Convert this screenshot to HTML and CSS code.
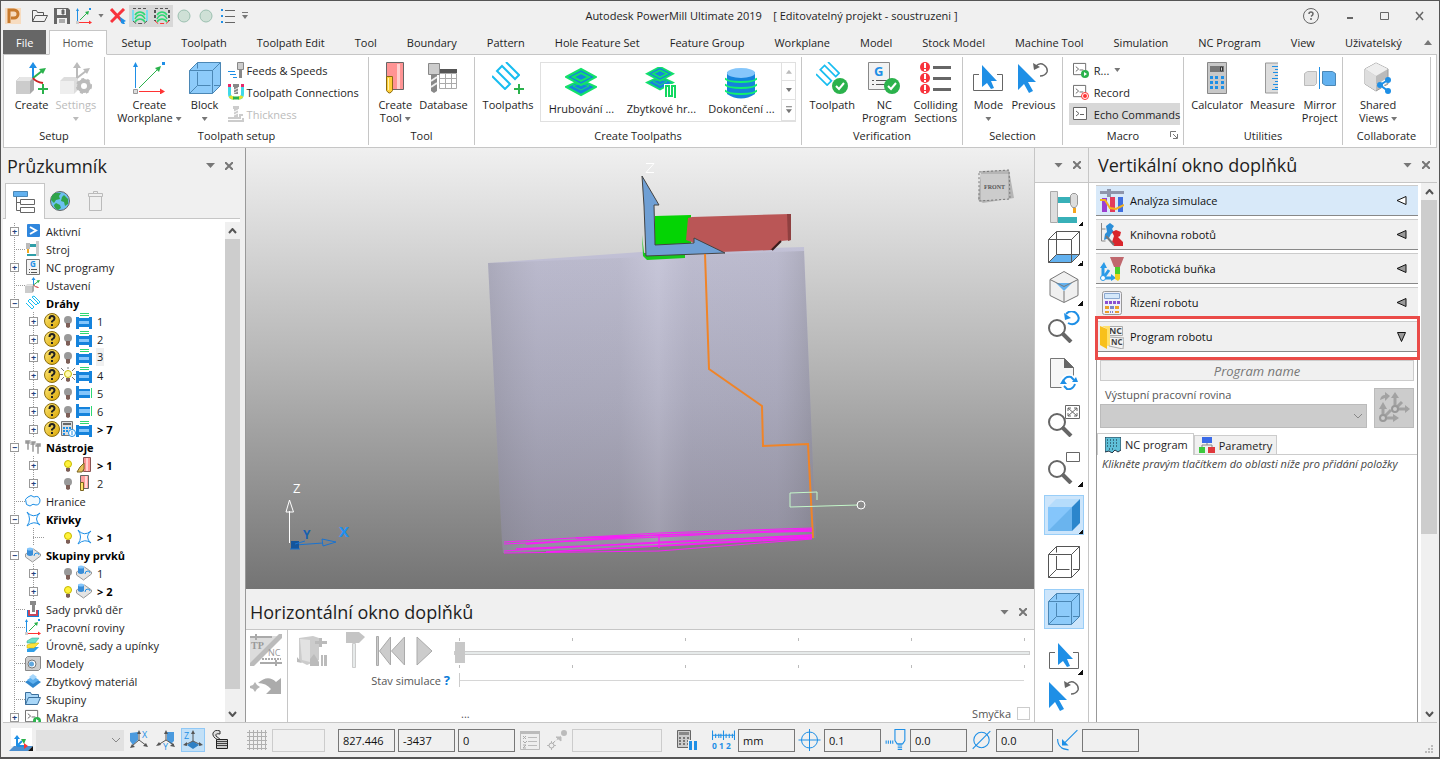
FILE: index.html
```
<!DOCTYPE html>
<html lang="cs">
<head>
    <meta charset="UTF-8">
    <meta name="viewport" content="width=device-width, initial-scale=1.0">
    <title>Autodesk PowerMill Ultimate 2019</title>
    <link rel="stylesheet" href="styles.css">
</head>
<body>

    <!-- Icon library -->
    <svg class="library" aria-hidden="true">
        <symbol id="i-logo" viewBox="0 0 16 16"><rect width="16" height="16" fill="#f7dcc0"/><path d="M4 15V2h5a4 4 0 0 1 0 8H6" fill="none" stroke="#c87a2c" stroke-width="3"/></symbol>
        <symbol id="i-open" viewBox="0 0 16 16"><path d="M.5 13.500v-11h4l1 2h6v3M.5 13.500l3-6h12l-3 6z" fill="none" stroke="#555"/></symbol>
        <symbol id="i-save" viewBox="0 0 16 16"><path d="M0 0h14l2 2v14H0z" fill="#666"/><path d="M3 1h9v6H3zM3 10h10v6H3z" fill="#f0f0f0"/><path d="M8 2h2v4H8zM5 12h6M5 14h6" stroke="#666" fill="#666"/></symbol>
        <symbol id="i-wp" viewBox="0 0 16 16"><path d="M1.500 2v11" stroke="#1e8fe6"/><path d="M3 14.500h11" stroke="#f33"/><path d="M1.500 0L0 3h3z" fill="#1e8fe6"/><path d="M16 14.500l-3-2v4z" fill="#f33"/><path d="M4 12l8-8" stroke="#2bb24c"/><path d="M13 3l-4 1 3 3z" fill="#2bb24c"/><path d="M0 13h3v3H0z" fill="#ccc"/><path d="M13 0h2v2h-2z" fill="#1e8fe6"/></symbol>
        <symbol id="i-del" viewBox="0 0 16 16"><path d="M1 1l12 13M14 1L1 14" stroke="#f8333c" stroke-width="3"/><path d="M10 9l6 4-2 1 1 2-2 0-2-1z" fill="#1e8fe6"/></symbol>
        <symbol id="i-zone" viewBox="0 0 16 16"><path d="M1 .5h14" stroke="#555" stroke-dasharray="3 2"/><path d="M1 2v11M15 2v11" stroke="#7ddcf0" stroke-width="2"/><path d="M1 13l3 2.500h8l3-2.500" stroke="#555" fill="none" stroke-dasharray="4 2"/><path d="M3 7q2-3 5-3t5 3M3 11q2-4 5-4t5 4M3 14q2-3 5-3t5 3" stroke="#2ed873" fill="none" stroke-width="1.500"/></symbol>
        <symbol id="i-zone2" viewBox="0 0 16 16"><path d="M1 .5h14" stroke="#555" stroke-dasharray="3 2"/><path d="M1 2v11M15 2v11" stroke="#555" stroke-width="2" stroke-dasharray="3 2"/><path d="M1 13l3 2.500h8l3-2.500" stroke="#f33" fill="none" stroke-dasharray="4 2"/><path d="M3 7q2-3 5-3t5 3M3 11q2-4 5-4t5 4M3 14q2-3 5-3t5 3" stroke="#2ed873" fill="none" stroke-width="1.500"/></symbol>
        <symbol id="i-dot" viewBox="0 0 16 16"><circle cx="8" cy="8" r="6" fill="#cfe0d6" stroke="#9cc0b0"/></symbol>
        <symbol id="i-list" viewBox="0 0 16 16"><path d="M5 2.500h10M5 8.500h10M5 14.500h10" stroke="#666"/><path d="M1 1h2v2H1zM1 7h2v2H1zM1 13h2v2H1z" fill="#1e8fe6"/></symbol>

        <!-- ribbon -->
        <symbol id="i-axes" viewBox="0 0 32 32"><path d="M0 19l4-4h14v13l-4 4H0z" fill="#a8a8a8"/><path d="M0 19l4-4h14l-4 4z" fill="#e6e6e6"/><path d="M0 19h14v13H0z" fill="#ccc"/><path d="M17 16V4" stroke="#1e8fe6" stroke-width="2"/><path d="M17 0l-4 6h8z" fill="#1e8fe6"/><path d="M17 16l9-7" stroke="#2bb24c" stroke-width="2"/><path d="M30 6l-7 1 4 5z" fill="#2bb24c"/><path d="M17 16q3 4 10 5" fill="none" stroke="#c22" stroke-width="2"/></symbol>
        <symbol id="i-create" viewBox="0 0 32 32"><use href="#i-axes" width="32" height="32"/><path d="M27 22v10M22 27h10" stroke="#fff" stroke-width="4"/><path d="M27 22v10M22 27h10" stroke="#2bb24c" stroke-width="2"/></symbol>
        <symbol id="i-settings" viewBox="0 0 32 32"><path d="M0 19l4-4h14v13l-4 4H0z" fill="#ddd"/><path d="M0 19h14v13H0z" fill="#eee"/><path d="M17 16V4M17 16l9-7" stroke="#bbb" stroke-width="2"/><path d="M17 0l-4 6h8zM30 6l-7 1 4 5z" fill="#bbb"/><circle cx="24" cy="24" r="5" fill="none" stroke="#bbb" stroke-width="4"/><circle cx="24" cy="24" r="7" fill="none" stroke="#bbb" stroke-width="2" stroke-dasharray="3 3"/></symbol>
        <symbol id="i-workplane" viewBox="0 0 32 32"><path d="M2.500 26V4" stroke="#1e8fe6"/><path d="M2.500 0L0 5h5z" fill="#1e8fe6"/><path d="M6 29.500h22" stroke="#f33"/><path d="M32 29.500l-5-3v6z" fill="#f33"/><path d="M6 26L25 7" stroke="#2bb24c"/><path d="M28 4l-6 2 4 4z" fill="#2bb24c"/><path d="M.5 27.500h4v4h-4z" fill="#ddd" stroke="#999"/><path d="M29 0h3v3h-3z" fill="#1e8fe6"/></symbol>
        <symbol id="i-block" viewBox="0 0 32 32"><path d="M.5 8.500l8-8h23v23l-8 8H.5z" fill="#8dcbfa"/><path d="M.5 8.500h23v23H.5zM.5 8.500l8-8h23l-8 8M31.500.5v23l-8 8M8.500.5v6M8.500 10v13.500h13M25 23.500h6.500M.5 31.500l8-8" fill="none" stroke="#4b87b5"/></symbol>
        <symbol id="i-feeds" viewBox="0 0 16 16"><path d="M9.500.5h6v7h-6z" fill="#ccc" stroke="#888"/><path d="M11 8h3v8h-3z" fill="#888"/><path d="M0 9.500h7M2 12.500h6M5 15.500h4" stroke="#1e8fe6"/></symbol>
        <symbol id="i-conn" viewBox="0 0 16 16"><path d="M1.500 3v7q0 4 4 4M14.500 3v7q0 4-4 4" fill="none" stroke="#3fd8e8" stroke-width="3"/><path d="M0 0h3v3H0zM13 0h3v3h-3z" fill="#e8286a"/><path d="M2 12q1 2 4 2M14 12q-1 2-4 2" fill="none" stroke="#e6e22a" stroke-width="3"/><path d="M5 14h6" stroke="#2bb24c" stroke-width="3" fill="none"/><path d="M5 0h6v3H5zM6 3h4v7H6z" fill="#888"/><path d="M6 6l4-2M6 9l4-2" stroke="#eee"/></symbol>
        <symbol id="i-thick" viewBox="0 0 16 16"><path d="M5 0h6v3H5zM6 3h4v8H6z" fill="#ccc"/><path d="M6 6l4-2M6 9l4-2" stroke="#fff"/><path d="M0 12h12v-3h3" fill="none" stroke="#ccc" stroke-width="2"/><path d="M0 15h15v-3" fill="none" stroke="#ccc" stroke-width="2"/></symbol>
        <symbol id="i-tool" viewBox="0 0 32 32"><path d="M7.500.5h17v27h-17z" fill="#ff9494" stroke="#666"/><path d="M18 2h3v25h-3z" fill="#ffd0d0"/><path d="M7.500 14.500h6v14q-3 5-6 0z" fill="#ffcf3a" stroke="#8a6a10"/><path d="M9.500 16v12" stroke="#fff3b0"/></symbol>
        <symbol id="i-database" viewBox="0 0 32 32"><path d="M12 7h18v4H12z" fill="#555"/><path d="M12.500 11.500h17v15h-17zM12 16.500h18M12 21.500h18M18.500 11v15M24.500 11v15" fill="#fff" stroke="#aaa"/><path d="M1.500 1.500h11v11h-11z" fill="#ccc" stroke="#888"/><path d="M4 13h6v16l-3 2-3-2z" fill="#888"/><path d="M4 19l6-4M4 25l6-4" stroke="#eee" stroke-width="2"/></symbol>
        <symbol id="i-zig" viewBox="0 0 28 28"><path d="M0 14l13 13 5-5L5 9l5-5 13 13 4-4L14 0" fill="none" stroke="#18bdf0" stroke-width="2"/></symbol>
        <symbol id="i-toolpaths" viewBox="0 0 32 32"><use href="#i-zig" width="28" height="28"/><path d="M27 20v12M21 26.500h11" stroke="#fff" stroke-width="4"/><path d="M27 22v10M22 27h10" stroke="#2bb24c" stroke-width="2"/></symbol>
        <symbol id="i-check" viewBox="0 0 16 16"><circle cx="8" cy="8" r="8" fill="#2bb24c"/><path d="M4 8l3 3 5-6" fill="none" stroke="#fff" stroke-width="2"/></symbol>
        <symbol id="i-verify" viewBox="0 0 32 32"><use href="#i-zig" width="24" height="24"/><use href="#i-check" x="16" y="16" width="16" height="16"/></symbol>
        <symbol id="i-rough" viewBox="0 0 32 32"><path d="M1 20l15-7 15 7-15 8z" fill="#1583dc" stroke="#12e26a" stroke-width="2"/><path d="M8 19l8-3 8 3-8 4z" fill="none" stroke="#12e26a"/><path d="M1 10l15-8 15 8-15 8z" fill="#1583dc" stroke="#12e26a" stroke-width="2"/><path d="M8 10l8-4 8 4-8 4z" fill="none" stroke="#12e26a" stroke-width="2"/></symbol>
        <symbol id="i-rest" viewBox="0 0 32 32"><use href="#i-rough" width="30" height="28" y="-2"/><path d="M19 17h13v15H19z" fill="#fff"/><path d="M21 30V19h3v10h3V19h3v12" fill="none" stroke="#12d860" stroke-width="2"/></symbol>
        <symbol id="i-finish" viewBox="0 0 32 32"><path d="M2 5v22q14 9 28 0V5z" fill="#1583dc"/><ellipse cx="16" cy="6" rx="14" ry="5" fill="#85c6fb"/><path d="M0 11q1 4 16 4t16-4M0 17q1 4 16 4t16-4M0 23q1 4 16 4t16-4" fill="none" stroke="#12f070" stroke-width="2"/></symbol>
        <symbol id="i-ncprog" viewBox="0 0 32 32"><path d="M.5.500h21v27H.5z" fill="#f2f2f2" stroke="#888"/><text x="6" y="14" font-size="13" font-weight="700" fill="#1e8fe6">G</text><path d="M4 18.500h2M8 18.500h11M4 22.500h2M8 22.500h9" stroke="#555"/><use href="#i-check" x="16" y="16" width="16" height="16"/></symbol>
        <symbol id="i-collide" viewBox="0 0 32 32"><g fill="#f8333c"><circle cx="5" cy="5" r="5"/><circle cx="5" cy="16" r="5"/><circle cx="5" cy="27" r="5"/></g><path d="M5 1v5M5 7v2M5 12v5M5 18v2M5 23v5M5 29v2" stroke="#fff" stroke-width="2"/><path d="M13 5.500h18M13 16.500h18M13 27.500h18" stroke="#666" stroke-width="3"/></symbol>
        <symbol id="i-mode" viewBox="0 0 32 32"><path d="M7 12.500H1.500v16h29v-16H25" fill="none" stroke="#666"/><path d="M10 3v22l5-4 4 6 3-1-3-7h6z" fill="#1e8fe6"/></symbol>
        <symbol id="i-previous" viewBox="0 0 32 32"><path d="M1 2v26l6-6 5 9 4-2-5-9h8z" fill="#1e8fe6"/><path d="M19 4q4-4 8-1 4 3 3 7-2 4-7 4" fill="none" stroke="#666" stroke-width="1.500"/><path d="M16 1l1 7 6-3z" fill="#666"/></symbol>
        <symbol id="i-echo" viewBox="0 0 16 16"><path d="M.5 1.500h13v12H.5z" fill="#fff" stroke="#666"/><path d="M3 5l3 2.500L3 10M7 8.500h4" fill="none" stroke="#666"/></symbol>
        <symbol id="i-run" viewBox="0 0 16 16"><use href="#i-echo" width="15" height="15"/><circle cx="12" cy="12" r="4" fill="#2bb24c"/><path d="M11 10l3 2-3 2z" fill="#fff"/></symbol>
        <symbol id="i-record" viewBox="0 0 16 16"><use href="#i-echo" width="15" height="15"/><circle cx="12" cy="12" r="3.500" fill="#fff" stroke="#f33"/><circle cx="12" cy="12" r="2" fill="#f33"/></symbol>
        <symbol id="i-calculator" viewBox="0 0 32 32"><path d="M6.500.500h19v31h-19z" fill="#c8c8c8" stroke="#888"/><path d="M9 4h14v6H9z" fill="#777"/><path d="M19.500 5h2v4h-2z" fill="#ccc" stroke="#333"/><path d="M9 14h3v3H9zM14 14h3v3h-3zM20 14h3v3h-3zM9 19h3v3H9zM14 19h3v3h-3zM20 19h3v3h-3zM9 24h3v3H9zM14 24h3v3h-3zM20 24h3v3h-3z" fill="#1e8fe6"/></symbol>
        <symbol id="i-measure" viewBox="0 0 32 32"><path d="M22 1H9.500v30H22" fill="#ddd" stroke="#999"/><path d="M16 4.500h6M17 10.500h5M16 16.500h6M17 22.500h5M16 27.500h6M19 7.500h3M19 13.500h3M19 19.500h3M19 25.500h3" stroke="#1e8fe6"/></symbol>
        <symbol id="i-mirror" viewBox="0 0 32 32"><path d="M.5 11.500l3-2h9v12l-2 2H.5z" fill="#ddd" stroke="#bbb"/><path d="M18.500 9.500h10l3 2v12h-10l-3-2z" fill="#62b1ef" stroke="#4b87b5"/><path d="M15.500 5v22" stroke="#1e8fe6"/></symbol>
        <symbol id="i-shared" viewBox="0 0 32 32"><path d="M14 1l12 6v15l-12 7L3 22V7z" fill="#bbb" stroke="#999"/><path d="M14 1l12 6-12 7L3 7z" fill="#eee"/><path d="M14 14v15L3 22V7z" fill="#ddd"/><path d="M26 18l-8 5 8 6" fill="none" stroke="#fff" stroke-width="4"/><path d="M26 18l-8 5 8 6" fill="none" stroke="#1e8fe6" stroke-width="2"/><g fill="#1e8fe6"><circle cx="26" cy="18" r="3"/><circle cx="18" cy="23" r="3"/><circle cx="26" cy="29" r="3"/></g></symbol>

        <!-- explorer -->
        <symbol id="i-tree" viewBox="0 0 24 24"><path d="M.5 1.500h14v5H.5z" fill="#62b1ef" stroke="#4b87b5"/><path d="M3.500 7v13.500h4M3.500 12.500h4M7.500 9.500h14v5h-14zM7.500 17.500h14v5h-14z" fill="none" stroke="#666"/></symbol>
        <symbol id="i-globe" viewBox="0 0 20 20"><circle cx="10" cy="10" r="9.500" fill="#6cc0f0" stroke="#666"/><path d="M5 2l6 0-2 3 1 3-4 1-2 3-3-3q0-5 4-7zM14 4l4 4v5l-3 2-1-4-3-1 1-4zM6 12l4 2 1 3-3 2q-4-2-4-5z" fill="#2ea44a"/></symbol>
        <symbol id="i-trash" viewBox="0 0 20 20"><path d="M3.500 5.500h12v14h-12zM2.500 2.500h14v3h-14zM7.500 2.500v-2h4v2" fill="none" stroke="#bbb"/></symbol>
        <symbol id="t-active" viewBox="0 0 16 16"><rect x="2" y="1" width="13" height="13" rx="1" fill="#2f86dd"/><path d="M5 4l6 3.500L5 11" fill="none" stroke="#fff" stroke-width="2"/></symbol>
        <symbol id="t-machine" viewBox="0 0 16 16"><path d="M11 0h3v15h-3z" fill="#ccc"/><path d="M4 3h7v3H4zM2 13h9v2H2z" fill="#2f9fa8"/><path d="M1 2h4v6H1z" fill="#bbb"/><path d="M2 8h2v4H2z" fill="#f0a81c"/></symbol>
        <symbol id="t-nc" viewBox="0 0 16 16"><path d="M1.500.5h13v15h-13z" fill="#f4f4f4" stroke="#777"/><text x="5" y="8" font-size="8" font-weight="700" fill="#1e8fe6">G</text><path d="M4 10.500h1M6 10.500h6M4 13.500h1M6 13.500h6" stroke="#555"/></symbol>
        <symbol id="t-paths" viewBox="0 0 16 16"><path d="M1 8l6 6 2-2-6-6 2-2 6 6 2-2-6-6 2-1 6 6-2 2" fill="none" stroke="#18bdf0"/></symbol>
        <symbol id="t-quest" viewBox="0 0 16 16"><circle cx="8" cy="8" r="7.500" fill="url(#gold)" stroke="#8a6d10"/><path d="M5.500 6q0-3 2.500-3t2.500 2.500q0 1.500-2.500 3v1M8 11v2" fill="none" stroke="#222" stroke-width="2"/></symbol>
        <symbol id="t-off" viewBox="0 0 16 16"><circle cx="8" cy="7" r="4" fill="#999"/><path d="M6 10h4v4l-2 1-2-1z" fill="#7d5f58"/></symbol>
        <symbol id="t-on" viewBox="0 0 16 16"><circle cx="8" cy="7" r="3.500" fill="#fff23a" stroke="#c5b800"/><path d="M6 11h4v3l-2 1-2-1z" fill="#7d5f58"/></symbol>
        <symbol id="t-lit" viewBox="0 0 16 16"><path d="M1 1l3 3M15 1l-3 3M0 7.500h3M13 7.500h3M1 13l3-3M15 13l-3-3M8 0v2" stroke="#777"/><circle cx="8" cy="7" r="3.500" fill="#fffab0" stroke="#c5b800"/><path d="M6 11h4v3l-2 1-2-1z" fill="#7d5f58"/></symbol>
        <symbol id="t-cyl" viewBox="0 0 16 16"><path d="M0 4h3v12H0zM13 4h3v12h-3zM3 5h10v9H3z" fill="#1583dc"/><path d="M3 8h10v3H3z" fill="#85c6fb"/></symbol>
        <symbol id="t-turn" viewBox="0 0 16 16"><use href="#t-cyl" width="16" height="16"/><path d="M4 0h9v1H4zM4 2h9v1H4z" fill="#2ed873"/></symbol>
        <symbol id="t-face" viewBox="0 0 16 16"><path d="M0 1h3v14H0zM3 4h11v9H3z" fill="#1583dc"/><path d="M3 6h11v4H3z" fill="#85c6fb"/><path d="M15 3h1v10h-1z" fill="#2ed873"/></symbol>
        <symbol id="t-calc" viewBox="0 0 16 16"><path d="M1.500.5h11v14h-11z" fill="#ddd" stroke="#777"/><path d="M3 2h8v2H3z" fill="#666"/><path d="M3 6h2v2H3zM6 6h2v2H6zM9 6h2v2H9zM3 9h2v2H3zM6 9h2v2H6zM3 12h2v2H3z" fill="#1e8fe6"/><circle cx="12" cy="12" r="3.500" fill="#fff" stroke="#1e8fe6"/><path d="M12 10v4" stroke="#1e8fe6"/></symbol>
        <symbol id="t-tools" viewBox="0 0 16 16"><path d="M0 1h6v4H4v6H2V5H0zM5 2h6v4H9v7H7V6H5zM10 4h6v4h-2v7h-2V8h-2z" fill="#999" stroke="#fff" stroke-width=".5"/></symbol>
        <symbol id="t-tip" viewBox="0 0 16 16"><path d="M7.500.500h7v14h-7z" fill="#ff9494" stroke="#855"/><path d="M10 1h2v13h-2z" fill="#ffd0d0"/><path d="M1 15l3-5 4-4v6l-2 3z" fill="#e6c15a" stroke="#7a6420"/></symbol>
        <symbol id="t-tool" viewBox="0 0 16 16"><path d="M4.500.5h8v13h-8z" fill="#ffa0a0" stroke="#666"/><path d="M9 1h2v12H9z" fill="#ffd8d8"/><path d="M4.500 7.500h3v8h-3z" fill="#ffe36b" stroke="#7a6420"/></symbol>
        <symbol id="t-bound" viewBox="0 0 16 16"><path d="M3 4q3-3 6 0 5-2 6 3 0 5-4 5-3-2-6 1-5-1-4-4-2-3 2-5z" fill="#f4fbff" stroke="#1e8fe6"/></symbol>
        <symbol id="t-curve" viewBox="0 0 16 16"><path d="M2 1q6 7 13 1-7 6 0 12-6-5-13 1 5-7 0-14z" fill="none" stroke="#1e8fe6"/></symbol>
        <symbol id="t-feat" viewBox="0 0 16 16"><path d="M.5 7l8-5 7 5v2l-8 6-7-5z" fill="#e4e4e4" stroke="#999"/><path d="M2 2v6q3 2 6 0V2z" fill="#3a8ed8"/><ellipse cx="5" cy="2" rx="3" ry="1.500" fill="#85c6fb"/><path d="M9 9q0-3 3-3 2 0 2 2" fill="none" stroke="#1e8fe6"/></symbol>
        <symbol id="t-holes" viewBox="0 0 16 16"><path d="M2 9h3v4h6V9h3v7H2z" fill="#1583dc"/><path d="M4 9v5h8V9" fill="none" stroke="#f33" stroke-width="1.500"/><path d="M5 0h6v4H5zM7 4h3v7H7z" fill="#888"/></symbol>
        <symbol id="t-levels" viewBox="0 0 16 16"><path d="M2 12l5-2h7l-5 5H2z" fill="#2f9fe8"/><path d="M2 8l5-2h7l-5 5H2z" fill="#ffe23a" stroke="#c8b000" stroke-width=".5"/><path d="M2 4l5-3h7l-4 5H2z" fill="#6ee0c8" stroke="#2f9f88" stroke-width=".5"/></symbol>
        <symbol id="t-model" viewBox="0 0 16 16"><path d="M.5 3.500l2-2h13v12l-2 2H.5z" fill="#ccc" stroke="#888"/><circle cx="7" cy="9" r="4" fill="#fff" stroke="#777"/><circle cx="6.500" cy="9" r="2.500" fill="#62a8de"/></symbol>
        <symbol id="t-stock" viewBox="0 0 16 16"><path d="M0 9l8-5 8 5-8 6z" fill="#2f86cd"/><path d="M2 7l6-4 6 4-6 4z" fill="#5fb0ee"/><path d="M4 4l4-3 4 3-4 3z" fill="#a5d6fb"/></symbol>
        <symbol id="t-folder" viewBox="0 0 16 16"><path d="M.5 13.500v-12h5l1 2h7v3M.5 13.500l3-7h12l-3 7z" fill="#a9d7f8" stroke="#3b6f9c"/></symbol>

        <!-- view toolbar -->
        <symbol id="v-machine" viewBox="0 0 32 32"><path d="M2.500.500h7v31h-7z" fill="#ddd" stroke="#aaa"/><path d="M10 6h13v6H10zM10 26h19v6H10z" fill="#38b0b8"/><path d="M22.500 4.500l2-2h3l2 2v9l-2 3h-3l-2-3z" fill="#ddd" stroke="#999"/><path d="M25 17h3v5h-3z" fill="#f5a51c"/></symbol>
        <symbol id="v-bottom" viewBox="0 0 32 32"><path d="M1 31l8-8h22l-7 8z" fill="#62b1ef"/><path d="M.5 8.500l8-8h23v23l-8 8H.5zM.5 8.500h23v23M23.500 8.500l8-8M8.500.5v23h23M.5 31.500l8-8" fill="none" stroke="#555"/></symbol>
        <symbol id="v-iso" viewBox="0 0 32 32"><path d="M16 .5l14 8v16l-14 7-14-7v-16z" fill="#f0f0f0" stroke="#777"/><path d="M8 12h16l-8 8z" fill="#62b1ef"/><path d="M2 8.500l14 7 14-7M16 20v11" fill="none" stroke="#777"/></symbol>
        <symbol id="v-lens" viewBox="0 0 32 32"><circle cx="9" cy="17" r="8" fill="none" stroke="#666" stroke-width="2"/><path d="M14 22l9 9" stroke="#666" stroke-width="4"/></symbol>
        <symbol id="v-back" viewBox="0 0 32 32"><use href="#v-lens" width="32" height="32"/><path d="M18 3q5-5 10-1 5 5 1 9-4 4-9 1" fill="none" stroke="#1e8fe6" stroke-width="2"/><path d="M16 2l1 7 6-2z" fill="#1e8fe6"/></symbol>
        <symbol id="v-refresh" viewBox="0 0 32 32"><path d="M2.500.500h14l9 9v20h-23z" fill="#f6f6f6" stroke="#777"/><path d="M16 0v10h10z" fill="#666"/><circle cx="21" cy="25" r="9" fill="#fff"/><path d="M15 24q2-6 8-5l3 3M27 26q-2 6-8 5l-3-3" fill="none" stroke="#1e8fe6" stroke-width="2"/><path d="M30 24h-6l4-5zM12 26h7l-4-5z" fill="#1e8fe6"/></symbol>
        <symbol id="v-fit" viewBox="0 0 32 32"><use href="#v-lens" width="32" height="32"/><path d="M17.500.5h14v13h-14z" fill="#fff" stroke="#666"/><path d="M20 3l9 8M29 3l-9 8M20 6V3h3M26 3h3v3M20 8v3h3M29 8v3h-3" fill="none" stroke="#666"/></symbol>
        <symbol id="v-box" viewBox="0 0 32 32"><use href="#v-lens" width="32" height="32"/><path d="M18.500.5h13v9h-13z" fill="#fff" stroke="#666"/></symbol>
        <symbol id="v-shaded" viewBox="0 0 32 32"><path d="M0 8h24v24H0z" fill="#6ab4ee"/><path d="M0 8l8-8h24l-8 8z" fill="#b5dcfb"/><path d="M24 8l8-8v24l-8 8z" fill="#2b86cc"/><path d="M0 32L24 8H0z" fill="#85c6fb"/></symbol>
        <symbol id="v-wire" viewBox="0 0 32 32"><path d="M.5 8.500h23v23H.5zM.5 8.500l8-8h23l-8 8M31.500.5v23l-8 8M8.500.5v6M8.500 10v13.500h13M25 23.500h6.500M.5 31.500l8-8" fill="none" stroke="#555"/></symbol>

        <!-- add-in panels -->
        <symbol id="a-analysis" viewBox="0 0 24 24"><path d="M2 9h5v14H2z" fill="#9b3fd0"/><path d="M10 8h5v15h-5z" fill="#e33c5c"/><path d="M18 8h5v15h-5z" fill="#3f6fe0"/><path d="M0 2h24v3H0zM7 0h4v8H7z" fill="#8e95ab"/><path d="M0 11l5 0 5 8 6 1 8-4" fill="none" stroke="#f5b31c" stroke-width="2"/></symbol>
        <symbol id="a-robots" viewBox="0 0 24 24"><path d="M1.500 0v18h4M1.500 6h4" fill="none" stroke="#888"/><path d="M6 3l4-3 4 3-2 3 2 3-3 2-2 4-5 2 1-6 2-2z" fill="#2b8ed8"/><path d="M12 9l4-2 5 2-1 4-2 1 5 5v4h-9l-2-4 2-6z" fill="#d9262c"/><path d="M6 13l8 9" stroke="#777" stroke-width="2"/></symbol>
        <symbol id="a-cell" viewBox="0 0 24 24"><path d="M3 20V9M3 21h9M4 20l5-7" stroke="#2b9be8" stroke-width="3"/><path d="M0 11l4-6 3 6zM11 17l5 4-5 3z" fill="#2b9be8"/><circle cx="3" cy="21" r="2.500" fill="#fff" stroke="#2b9be8"/><path d="M10 0h14l-4 10h-6z" fill="#c0686e"/><path d="M15 10h5v7h-5z" fill="#4ad02a"/><path d="M15 17h5v5l-2 2-3-2z" fill="#f0d020"/></symbol>
        <symbol id="a-control" viewBox="0 0 24 24"><rect x="2.500" y=".5" width="19" height="23" rx="2" fill="#f0f0f8" stroke="#999"/><path d="M4.500 2.500h15v5h-15z" fill="#d5e8fa" stroke="#8aa8d0"/><path d="M5 10h3v3H5zM9 10h3v3H9zM13 10h3v3h-3zM17 10h3v3h-3z" fill="#8a4fd0"/><path d="M5 15h4v3H5zM15 15h4v3h-4zM5 20h4v2H5zM15 20h4v2h-4z" fill="#eba02a"/><path d="M10 15h4v3h-4zM10 20h1v2h-1zM12 20h1v2h-1z" fill="#7b86c8"/></symbol>
        <symbol id="a-program" viewBox="0 0 24 24"><path d="M8.500 1.500h14v9h-14zM9 12l15 1-1 11-14-3z" fill="#f4f4f4" stroke="#aaa"/><text x="9" y="9" font-size="9" font-weight="700" fill="#444">NC</text><text x="11" y="20" font-size="8" font-weight="700" fill="#444">NC</text><path d="M2 1h8v19l-3 1V4z" fill="#ffdf6a"/><path d="M0 1l7 3v20l-7-4z" fill="#f8c01c"/></symbol>
        <symbol id="a-tape" viewBox="0 0 16 16"><path d="M0 0h16v13l-3 2-3-2-3 3-3-2-4 1z" fill="#5fc0d8" stroke="#234"/><path d="M2 3h12M2 6h12M2 9h12M4 12h6" stroke="#123" stroke-dasharray="1 2"/></symbol>
        <symbol id="a-params" viewBox="0 0 16 16"><path d="M8 5v3M3 11V8h10v3" fill="none" stroke="#888"/><path d="M3 0h10v6H3z" fill="#3a6ae8"/><path d="M0 10h6v6H0z" fill="#3cc83c"/><path d="M9 10h7v6H9z" fill="#e0383c"/></symbol>
        <symbol id="a-frames" viewBox="0 0 32 32"><g fill="none" stroke="#a2a2a2" stroke-width="3"><path d="M5 26V15M5 26h12M17 17V5M17 17h13M17 17l7-7M5 26l8-8"/></g><path d="M1 17l4-7 4 7zM13 6l4-6 4 6zM15 22l6 4-6 4zM27 13l5 4-5 4zM2 8q1-5 5-5V0l5 4-5 5V6z" fill="#a2a2a2"/><g fill="#ccc" stroke="#999" stroke-width="2"><circle cx="5" cy="26" r="3"/><circle cx="17" cy="17" r="3"/></g></symbol>
        <symbol id="a-tpnc" viewBox="0 0 32 32"><path d="M0 2h30L2 30H0z" fill="#dcdcdc"/><path d="M32 0v4L4 32H0v-3L29 0z" fill="#bbb"/><path d="M0 3h22M10 29h22M6 0v6M26 26v6" stroke="#aaa" stroke-width="2"/><text x="1" y="15" font-size="10" font-weight="700" font-family="Liberation Serif, serif" fill="#999">TP</text><text x="18" y="22" font-size="9" fill="#999">NC</text><path d="M12 25h19" stroke="#aaa" stroke-dasharray="2 1" stroke-width="2"/></symbol>
        <symbol id="a-jump" viewBox="0 0 32 20"><path d="M8 6Q18-3 26 5l5-4v16H16l5-5q-5-6-13-6z" fill="#ababab"/><path d="M0 9l3-1 2-3 2 3 3 2-3 2-2 3-2-3-3-1z" fill="#b5b5b5"/></symbol>
        <symbol id="a-robot" viewBox="0 0 32 32"><path d="M2 3l14-2 6 2v22l-12 5-8-4z" fill="#ccc"/><path d="M3 4l10 1v22l-8-2z" fill="#e2e2e2"/><path d="M18 6h12v3H18zM22 3h3v9h-3zM13 24l4-5 5 8v4h-9zM24 20h2v11h-2zM27 20h3v11h-3zM0 22l5 6-5-1z" fill="#bbb"/></symbol>
        <symbol id="a-flag" viewBox="0 0 20 36"><path d="M0 0h13l6 5-6 6H0z" fill="#c4c4c4"/><path d="M6.500 11.500h3v24h-3z" fill="#e6eaea" stroke="#ccc"/></symbol>
        <symbol id="a-rewind" viewBox="0 0 32 32"><path d="M1.500 1.500h2v29h-2zM15.500 2v28l-11-14zM29.500 2v28l-13-14z" fill="#ccc" stroke="#aaa"/></symbol>
        <symbol id="a-play" viewBox="0 0 18 32"><path d="M1 2l15 14L1 30z" fill="#ccc" stroke="#aaa"/></symbol>

        <!-- status bar -->
        <symbol id="s-plane" viewBox="0 0 24 24"><path d="M2 0h21v18H2z" fill="#fff"/><path d="M0 23l5-5h19l-5 5z" fill="#4b8fd0"/><path d="M8 18V10M8 18h8M8 18l5-5" stroke="#1e8fe6" stroke-width="2"/><path d="M5 11l3-4 3 4z" fill="#1e8fe6"/><path d="M15 15l4 3-4 3z" fill="#f33"/><path d="M12 11h5l-2 5z" fill="#2bb24c"/><path d="M24 18v5h-5z" fill="#111"/></symbol>
        <symbol id="s-x" viewBox="0 0 20 20"><path d="M1 3l8-1v8l-5 5-3-4z" fill="#4b9ade"/><path d="M10 2v8l-7 6M10 10l8 6" fill="none" stroke="#555"/><path d="M8 4l2-4 2 4zM1 18l2-4 3 3zM19 17l-5-1 3-3z" fill="#555"/><text x="13" y="8" font-size="9" fill="#1e8fe6">X</text></symbol>
        <symbol id="s-y" viewBox="0 0 20 20"><path d="M11 2h7v9l-3 3-4-4z" fill="#4b9ade"/><path d="M10 2v8l-8 5M10 10l8 5" fill="none" stroke="#555"/><path d="M8 4l2-4 2 4zM0 16l3-4 2 3zM19 17l-5-1 3-3z" fill="#555"/><text x="7" y="20" font-size="9" fill="#1e8fe6">Y</text></symbol>
        <symbol id="s-z" viewBox="0 0 20 20"><path d="M4 15l6-4 6 4-6 4z" fill="#2f80c4"/><path d="M10 2v9l-8 4M10 11l8 4" fill="none" stroke="#555"/><path d="M8 4l2-4 2 4zM0 15l4-3v4zM20 15l-4-3v4z" fill="#555"/><text x="1" y="9" font-size="9" fill="#1e8fe6">Z</text></symbol>
        <symbol id="s-lock" viewBox="0 0 20 20"><path d="M8 10Q2 7 3 3q2-4 7-2v3Q5 3 6 6l5 4" fill="#ddd" stroke="#333"/><path d="M6.500 9.500h11v9h-11z" fill="#ccc" stroke="#222"/><path d="M7 11.500h10M7 13.500h10M7 15.500h10" stroke="#444"/></symbol>
        <symbol id="s-grid" viewBox="0 0 20 20"><path d="M2.500 0v20M6.500 0v20M10.500 0v20M14.500 0v20M18.500 0v20M0 2.500h20M0 6.500h20M0 10.500h20M0 14.500h20M0 18.500h20" stroke="#b0b0b0"/></symbol>
        <symbol id="s-xyz" viewBox="0 0 20 20"><path d="M.5 1.500h19v18H.5z" fill="#eee" stroke="#bbb"/><path d="M0 1h20v3H0zM8 7h9v1H8zM8 11h9v1H8zM8 15h9v1H8z" fill="#bbb"/><path d="M3 6l3 3M6 6L3 9M3 11l2 2 2-2M3 15h3l-3 3h3" fill="none" stroke="#aaa"/></symbol>
        <symbol id="s-points" viewBox="0 0 20 20"><circle cx="17" cy="3" r="3" fill="#bbb"/><path d="M6 13l8-7" stroke="#aaa" stroke-dasharray="3 2"/><path d="M9 7h5v4zM0 15.500h9M4.500 11v9" fill="#bbb" stroke="#bbb"/><circle cx="4.500" cy="15.500" r="2.500" fill="#eee" stroke="#aaa"/></symbol>
        <symbol id="s-pause" viewBox="0 0 20 20"><path d="M.5.500h13v17H.5z" fill="#ccc" stroke="#666"/><path d="M2 2h10v3H2z" fill="#888"/><path d="M2 8h10M2 11h10M2 14h10" stroke="#777" stroke-width="2" stroke-dasharray="2 2"/><path d="M11 10h9v10h-9z" fill="#f0f0f0"/><path d="M12 11h3v9h-3zM17 11h3v9h-3z" fill="#1e8fe6"/></symbol>
        <symbol id="s-ruler" viewBox="0 0 22 20"><path d="M.5 1v9M11 1v9M21.500 1v9M.5 5.500h21M3.500 4v4M6.500 4v4M8.500 4v4M13.500 4v4M16.500 4v4M19.500 4v4" stroke="#1e8fe6"/><text x="0" y="19" font-size="8" font-weight="700" fill="#1e8fe6">0 1 2</text></symbol>
        <symbol id="s-cross" viewBox="0 0 22 22"><circle cx="11" cy="11" r="8" fill="none" stroke="#1e8fe6"/><path d="M0 11h22M11 0v22" stroke="#1e8fe6"/></symbol>
        <symbol id="s-step" viewBox="0 0 20 20"><path d="M9.500.5h9v10l-2 3h-5l-2-3z" fill="none" stroke="#1e8fe6"/><path d="M1 12h8" stroke="#1e8fe6" stroke-width="3" stroke-dasharray="1 1"/><path d="M14 14v6" stroke="#1e8fe6" stroke-width="4" stroke-dasharray="1 1"/></symbol>
        <symbol id="s-diam" viewBox="0 0 20 20"><circle cx="10" cy="10" r="7" fill="none" stroke="#1e8fe6"/><path d="M2 18L18 2" stroke="#1e8fe6"/></symbol>
        <symbol id="s-rad" viewBox="0 0 20 20"><path d="M19 1L6 14" stroke="#1e8fe6"/><path d="M5 15v-6l6 6z" fill="#1e8fe6"/><path d="M1 9q0 9 10 10" fill="none" stroke="#1e8fe6"/></symbol>
    </svg>

    <!-- Title bar -->
    <header class="titlebar">
        <div class="quick">
            <svg class="icon16"><use href="#i-logo"/></svg>
            <button class="quick-button" aria-label="Open"><svg class="icon16"><use href="#i-open"/></svg></button>
            <button class="quick-button" aria-label="Save"><svg class="icon16"><use href="#i-save"/></svg></button>
            <button class="quick-button" aria-label="Workplane"><svg class="icon16"><use href="#i-wp"/></svg></button>
            <span class="caret"></span>
            <button class="quick-button" aria-label="Delete"><svg class="icon16"><use href="#i-del"/></svg></button>
            <button class="quick-button pressed" aria-label="Rapid moves"><svg class="icon16"><use href="#i-zone"/></svg></button>
            <button class="quick-button pressed" aria-label="Collisions"><svg class="icon16"><use href="#i-zone2"/></svg></button>
            <button class="quick-button" aria-label="State 1"><svg class="icon16"><use href="#i-dot"/></svg></button>
            <button class="quick-button" aria-label="State 2"><svg class="icon16"><use href="#i-dot"/></svg></button>
            <button class="quick-button" aria-label="List"><svg class="icon16"><use href="#i-list"/></svg></button>
            <span class="caret bar"></span>
        </div>
        <div class="app-title">Autodesk PowerMill Ultimate 2019 &nbsp;&nbsp; [ Editovatelný projekt - soustruzeni ]</div>
        <div class="window-buttons">
            <button aria-label="Help"><svg width="18" height="18"><circle cx="9" cy="9" r="7.500" fill="none" stroke="#666"/><path d="M7 7q0-2 2-2t2 2q0 1-2 2.500M9 11v2" fill="none" stroke="#666" stroke-width="1.500"/></svg></button>
            <button aria-label="Minimize"><svg width="10" height="10"><path d="M2 7h6" stroke="#666" stroke-width="2"/></svg></button>
            <button aria-label="Maximize"><svg width="10" height="10"><path d="M.5 1.500h8v7h-8z" fill="none" stroke="#666"/></svg></button>
            <button aria-label="Close"><svg width="10" height="10"><path d="M1 1l7 8M8 1L1 9" stroke="#666" stroke-width="1.500"/></svg></button>
        </div>
    </header>

    <!-- Ribbon tabs -->
    <nav class="tabs">
        <button class="tab file">File</button>
        <button class="tab active">Home</button>
        <button class="tab">Setup</button>
        <button class="tab">Toolpath</button>
        <button class="tab">Toolpath Edit</button>
        <button class="tab">Tool</button>
        <button class="tab">Boundary</button>
        <button class="tab">Pattern</button>
        <button class="tab">Hole Feature Set</button>
        <button class="tab">Feature Group</button>
        <button class="tab">Workplane</button>
        <button class="tab">Model</button>
        <button class="tab">Stock Model</button>
        <button class="tab">Machine Tool</button>
        <button class="tab">Simulation</button>
        <button class="tab">NC Program</button>
        <button class="tab">View</button>
        <button class="tab">Uživatelský</button>
        <button class="collapse" aria-label="Collapse ribbon"><svg width="8" height="5"><path d="M4 0l4 5H0z" fill="#777"/></svg></button>
    </nav>

    <section class="ribbon">
        <div class="group">
            <div class="tools">
                <button class="big"><svg class="icon32"><use href="#i-create"/></svg>Create</button>
                <button class="big" disabled><svg class="icon32"><use href="#i-settings"/></svg>Settings<span class="line"><i class="caret"></i></span></button>
            </div>
            <div class="group-name">Setup</div>
        </div>
        <div class="group">
            <div class="tools">
                <button class="big"><svg class="icon32"><use href="#i-workplane"/></svg>Create<span class="line">Workplane <i class="caret"></i></span></button>
                <button class="big"><svg class="icon32"><use href="#i-block"/></svg>Block<span class="line"><i class="caret"></i></span></button>
                <div class="stack">
                    <button class="small"><svg class="icon16"><use href="#i-feeds"/></svg>Feeds &amp; Speeds</button>
                    <button class="small"><svg class="icon16"><use href="#i-conn"/></svg>Toolpath Connections</button>
                    <button class="small" disabled><svg class="icon16"><use href="#i-thick"/></svg>Thickness</button>
                </div>
            </div>
            <div class="group-name">Toolpath setup</div>
        </div>
        <div class="group">
            <div class="tools">
                <button class="big"><svg class="icon32"><use href="#i-tool"/></svg>Create<span class="line">Tool <i class="caret"></i></span></button>
                <button class="big"><svg class="icon32"><use href="#i-database"/></svg>Database</button>
            </div>
            <div class="group-name">Tool</div>
        </div>
        <div class="group">
            <div class="tools">
                <button class="big"><svg class="icon32"><use href="#i-toolpaths"/></svg>Toolpaths</button>
                <div class="gallery">
                    <button class="big"><svg class="icon32"><use href="#i-rough"/></svg>Hrubování ...</button>
                    <button class="big"><svg class="icon32"><use href="#i-rest"/></svg>Zbytkové hr...</button>
                    <button class="big"><svg class="icon32"><use href="#i-finish"/></svg>Dokončení ...</button>
                    <div class="gallery-scroll">
                        <button aria-label="Previous row"><i class="caret up"></i></button>
                        <button aria-label="Next row"><i class="caret"></i></button>
                        <button aria-label="More"><i class="caret bar"></i></button>
                    </div>
                </div>
            </div>
            <div class="group-name">Create Toolpaths</div>
        </div>
        <div class="group">
            <div class="tools">
                <button class="big"><svg class="icon32"><use href="#i-verify"/></svg>Toolpath</button>
                <button class="big"><svg class="icon32"><use href="#i-ncprog"/></svg>NC<span class="line">Program</span></button>
                <button class="big"><svg class="icon32"><use href="#i-collide"/></svg>Colliding<span class="line">Sections</span></button>
            </div>
            <div class="group-name">Verification</div>
        </div>
        <div class="group">
            <div class="tools">
                <button class="big"><svg class="icon32"><use href="#i-mode"/></svg>Mode<span class="line"><i class="caret"></i></span></button>
                <button class="big"><svg class="icon32"><use href="#i-previous"/></svg>Previous</button>
            </div>
            <div class="group-name">Selection</div>
        </div>
        <div class="group">
            <div class="tools">
                <div class="stack macro">
                    <button class="small"><svg class="icon16"><use href="#i-run"/></svg>R... <i class="caret"></i></button>
                    <button class="small"><svg class="icon16"><use href="#i-record"/></svg>Record</button>
                    <button class="small pressed"><svg class="icon16"><use href="#i-echo"/></svg>Echo Commands</button>
                </div>
            </div>
            <div class="group-name launcher">Macro<svg width="8" height="8"><path d="M.5 6V.5H6M3 3l4 4M7.500 3v4.500H3" fill="none" stroke="#777"/></svg></div>
        </div>
        <div class="group">
            <div class="tools">
                <button class="big"><svg class="icon32"><use href="#i-calculator"/></svg>Calculator</button>
                <button class="big"><svg class="icon32"><use href="#i-measure"/></svg>Measure</button>
                <button class="big"><svg class="icon32"><use href="#i-mirror"/></svg>Mirror<span class="line">Project</span></button>
            </div>
            <div class="group-name">Utilities</div>
        </div>
        <div class="group">
            <div class="tools left">
                <button class="big"><svg class="icon32"><use href="#i-shared"/></svg>Shared<span class="line">Views <i class="caret"></i></span></button>
            </div>
            <div class="group-name">Collaborate</div>
        </div>
    </section>

    <main class="workspace">

        <!-- Explorer -->
        <aside class="explorer">
            <div class="panel-head">
                <h2>Průzkumník</h2>
                <button aria-label="Menu"><i class="caret big-caret"></i></button>
                <button aria-label="Close"><svg width="8" height="8"><path d="M0 0l8 8M8 0L0 8" stroke="#777" stroke-width="2"/></svg></button>
            </div>
            <div class="explorer-tabs">
                <button class="active" aria-label="Tree"><svg class="icon24"><use href="#i-tree"/></svg></button>
                <button aria-label="Web"><svg class="icon20"><use href="#i-globe"/></svg></button>
                <button aria-label="Recycle bin"><svg class="icon20"><use href="#i-trash"/></svg></button>
            </div>
            <div class="explorer-body">
                <ul class="tree">
                    <li class="row"><button class="toggle">+</button><svg class="icon16"><use href="#t-active"/></svg><span>Aktivní</span></li>
                    <li class="row"><i class="leaf"></i><svg class="icon16"><use href="#t-machine"/></svg><span>Stroj</span></li>
                    <li class="row"><button class="toggle">+</button><svg class="icon16"><use href="#t-nc"/></svg><span>NC programy</span></li>
                    <li class="row"><i class="leaf"></i><svg class="icon16"><use href="#i-axes"/></svg><span>Ustavení</span></li>
                    <li class="row"><button class="toggle">−</button><svg class="icon16"><use href="#t-paths"/></svg><b>Dráhy</b></li>
                    <li>
                        <ul class="branch">
                            <li class="row"><button class="toggle">+</button><svg class="icon16"><use href="#t-quest"/></svg><svg class="icon16"><use href="#t-off"/></svg><svg class="icon16"><use href="#t-turn"/></svg><span>1</span></li>
                            <li class="row"><button class="toggle">+</button><svg class="icon16"><use href="#t-quest"/></svg><svg class="icon16"><use href="#t-off"/></svg><svg class="icon16"><use href="#t-turn"/></svg><span>2</span></li>
                            <li class="row"><button class="toggle">+</button><svg class="icon16"><use href="#t-quest"/></svg><svg class="icon16"><use href="#t-off"/></svg><svg class="icon16"><use href="#t-turn"/></svg><span class="hovered">3</span></li>
                            <li class="row"><button class="toggle">+</button><svg class="icon16"><use href="#t-quest"/></svg><svg class="icon16"><use href="#t-lit"/></svg><svg class="icon16"><use href="#t-turn"/></svg><span>4</span></li>
                            <li class="row"><button class="toggle">+</button><svg class="icon16"><use href="#t-quest"/></svg><svg class="icon16"><use href="#t-off"/></svg><svg class="icon16"><use href="#t-face"/></svg><span>5</span></li>
                            <li class="row"><button class="toggle">+</button><svg class="icon16"><use href="#t-quest"/></svg><svg class="icon16"><use href="#t-off"/></svg><svg class="icon16"><use href="#t-face"/></svg><span>6</span></li>
                            <li class="row"><button class="toggle">+</button><svg class="icon16"><use href="#t-quest"/></svg><svg class="icon16"><use href="#t-calc"/></svg><svg class="icon16"><use href="#t-turn"/></svg><b>&gt; 7</b></li>
                        </ul>
                    </li>
                    <li class="row"><button class="toggle">−</button><svg class="icon16"><use href="#t-tools"/></svg><b>Nástroje</b></li>
                    <li>
                        <ul class="branch">
                            <li class="row"><button class="toggle">+</button><svg class="icon16"></svg><svg class="icon16"><use href="#t-on"/></svg><svg class="icon16"><use href="#t-tip"/></svg><b>&gt; 1</b></li>
                            <li class="row"><button class="toggle">+</button><svg class="icon16"></svg><svg class="icon16"><use href="#t-off"/></svg><svg class="icon16"><use href="#t-tool"/></svg><span>2</span></li>
                        </ul>
                    </li>
                    <li class="row"><i class="leaf"></i><svg class="icon16"><use href="#t-bound"/></svg><span>Hranice</span></li>
                    <li class="row"><button class="toggle">−</button><svg class="icon16"><use href="#t-curve"/></svg><b>Křivky</b></li>
                    <li>
                        <ul class="branch">
                            <li class="row"><i class="leaf"></i><svg class="icon16"></svg><svg class="icon16"><use href="#t-on"/></svg><svg class="icon16"><use href="#t-curve"/></svg><b>&gt; 1</b></li>
                        </ul>
                    </li>
                    <li class="row"><button class="toggle">−</button><svg class="icon16"><use href="#t-feat"/></svg><b>Skupiny prvků</b></li>
                    <li>
                        <ul class="branch">
                            <li class="row"><button class="toggle">+</button><svg class="icon16"></svg><svg class="icon16"><use href="#t-off"/></svg><svg class="icon16"><use href="#t-feat"/></svg><span>1</span></li>
                            <li class="row"><button class="toggle">+</button><svg class="icon16"></svg><svg class="icon16"><use href="#t-on"/></svg><svg class="icon16"><use href="#t-feat"/></svg><b>&gt; 2</b></li>
                        </ul>
                    </li>
                    <li class="row"><i class="leaf"></i><svg class="icon16"><use href="#t-holes"/></svg><span>Sady prvků děr</span></li>
                    <li class="row"><i class="leaf"></i><svg class="icon16"><use href="#i-wp"/></svg><span>Pracovní roviny</span></li>
                    <li class="row"><i class="leaf"></i><svg class="icon16"><use href="#t-levels"/></svg><span>Úrovně, sady a upínky</span></li>
                    <li class="row"><i class="leaf"></i><svg class="icon16"><use href="#t-model"/></svg><span>Modely</span></li>
                    <li class="row"><i class="leaf"></i><svg class="icon16"><use href="#t-stock"/></svg><span>Zbytkový materiál</span></li>
                    <li class="row"><i class="leaf"></i><svg class="icon16"><use href="#t-folder"/></svg><span>Skupiny</span></li>
                    <li class="row"><button class="toggle">+</button><svg class="icon16"><use href="#i-run"/></svg><span>Makra</span></li>
                </ul>
                <div class="scrollbar">
                    <svg width="9" height="6"><path d="M1 5l3.500-4L8 5" fill="none" stroke="#555" stroke-width="2"/></svg>
                    <div class="thumb tree-thumb"></div>
                    <svg width="9" height="6"><path d="M1 1l3.500 4L8 1" fill="none" stroke="#555" stroke-width="2"/></svg>
                </div>
            </div>
        </aside>

        <div class="center">
            <!-- 3D view -->
            <div class="viewport">
                <svg class="scene" viewBox="0 0 788 441">
                    <defs>
                        <linearGradient id="gold" x1="0" y1="0" x2="1" y2="1"><stop offset="0" stop-color="#ffe97a"/><stop offset="1" stop-color="#d9a400"/></linearGradient>
                        <linearGradient id="body-v" x1="0" y1="0" x2="0" y2="1"><stop offset="0" stop-color="#c2c1d6"/><stop offset=".5" stop-color="#adacc0"/><stop offset="1" stop-color="#9391a2"/></linearGradient>
                        <linearGradient id="body-h" x1="0" y1="0" x2="1" y2="0"><stop offset="0" stop-color="#555" stop-opacity=".2"/><stop offset=".15" stop-color="#777" stop-opacity=".08"/><stop offset=".4" stop-color="#888" stop-opacity=".1"/><stop offset=".52" stop-color="#fff" stop-opacity=".1"/><stop offset=".62" stop-color="#888" stop-opacity=".08"/><stop offset=".88" stop-color="#777" stop-opacity=".08"/><stop offset="1" stop-color="#555" stop-opacity=".25"/></linearGradient>
                    </defs>
                    <path d="M242 115l153-11 163-5 12 291-250 12-63 3-1-12z" fill="url(#body-v)"/>
                    <path d="M242 115l316-12 12 287-250 12-63 3-1-12z" fill="url(#body-h)"/>
                    <path d="M396 87l2 18 41-1v6l-38 2-4-4z" fill="#17c91c"/>
                    <path d="M409 68l36-1v30h-36z" fill="#04d404"/>
                    <path d="M442 70l4-1 98-3 1 26-10 1-9 9-52 2-34-12z" fill="#ba5656"/>
                    <path d="M541 66h4v26l-3 1zM535 93l-9 9h-2l9-9z" fill="#8f4040"/>
                    <path d="M526 102l9-9" stroke="#3a1a1a" stroke-width="2"/>
                    <path d="M396 28l17 29h-5l1 40 39-2v-5l31 15-79 3-2-50z" fill="#6f9fd4" stroke="#444"/>
                    <path d="M459 106l4 115 53 37 1 40 45-2 5 94" fill="none" stroke="#f08427" stroke-width="2"/>
                    <g fill="none" stroke="#f71ff7">
                        <path d="M258 394l155-9 153-5M258 396l155-7 153-8M258 403l155-9 153-6M258 405l155-2 153-12"/>
                        <path d="M330 390l236-8M280 396l130-9 156-4M270 401l140-6 156-8M340 402l226-13M300 404l266-14M413 386v14" stroke-width="1.500"/>
                    </g>
                    <path d="M571 352v-8l-27 1v14l68-2" fill="none" stroke="#c4f7c9"/>
                    <circle cx="615" cy="357" r="4" fill="none" stroke="#fff"/>
                    <path d="M400 15.500h8l-8 9h8" fill="none" stroke="#fff"/>
                    <!-- orientation triad -->
                    <path d="M43.500 395v-32M40 364l3.500-12 4 12z" fill="none" stroke="#fff"/>
                    <path d="M49 397l28-2M76 391l14 3-13 4z" fill="none" stroke="#1a73d0"/>
                    <path d="M45 393h8v8h-8z" fill="#14559c"/>
                    <path d="M49 396l10-3M44 401h10" stroke="#1a73d0"/>
                    <text x="47" y="345" font-size="13" fill="#fff">Z</text>
                    <text x="57" y="391" font-size="12" font-weight="700" fill="#1560b0">Y</text>
                    <text x="93" y="389" font-size="15" font-weight="700" fill="#2090f0">X</text>
                    <!-- view cube -->
                    <path d="M735 23l28-1 5 28-31 5-5-3z" fill="#b5b5b5"/>
                    <path d="M735 26h27v26h-27z" fill="#ccc"/>
                    <path d="M733 24l30-2 1 29-31 2z" fill="none" stroke="#777" stroke-dasharray="2 2"/>
                    <text x="738" y="41" font-size="6" font-weight="700" font-family="Liberation Serif, serif" fill="#555">FRONT</text>
                </svg>
            </div>

            <!-- Horizontal add-in window -->
            <section class="bottom-panel">
                <div class="panel-head">
                    <h2>Horizontální okno doplňků</h2>
                    <button aria-label="Menu"><i class="caret big-caret"></i></button>
                    <button aria-label="Close"><svg width="8" height="8"><path d="M0 0l8 8M8 0L0 8" stroke="#777" stroke-width="2"/></svg></button>
                </div>
                <div class="bottom-body">
                    <div class="side-tools">
                        <button aria-label="TP NC" disabled><svg class="icon32"><use href="#a-tpnc"/></svg></button>
                        <button aria-label="Add" disabled><svg width="32" height="20"><use href="#a-jump"/></svg></button>
                    </div>
                    <div class="player">
                        <div class="player-buttons">
                            <button aria-label="Robot" disabled><svg class="icon32"><use href="#a-robot"/></svg></button>
                            <button aria-label="Marker" disabled><svg width="20" height="36"><use href="#a-flag"/></svg></button>
                            <button aria-label="Rewind" disabled><svg class="icon32"><use href="#a-rewind"/></svg></button>
                            <button aria-label="Play" disabled><svg width="18" height="32"><use href="#a-play"/></svg></button>
                        </div>
                        <div class="sim-label">Stav simulace <b>?</b></div>
                    </div>
                    <div class="timeline">
                        <div class="ticks"><i></i><i></i><i></i><i></i><i></i><i></i></div>
                        <input type="range" value="0" disabled aria-label="Simulace">
                        <div class="ticks"><i></i><i></i><i></i><i></i><i></i><i></i></div>
                        <div class="progress"></div>
                        <div class="timeline-foot">
                            <span>...</span>
                            <label>Smyčka <input type="checkbox" disabled></label>
                        </div>
                    </div>
                </div>
            </section>
        </div>

        <!-- View toolbar -->
        <aside class="viewbar">
            <div class="panel-head">
                <button aria-label="Menu"><i class="caret big-caret"></i></button>
                <button aria-label="Close"><svg width="8" height="8"><path d="M0 0l8 8M8 0L0 8" stroke="#777" stroke-width="2"/></svg></button>
            </div>
            <div class="view-buttons">
                <button class="more" aria-label="Machine"><svg class="icon32"><use href="#v-machine"/></svg></button>
                <button class="more" aria-label="View from bottom"><svg class="icon32"><use href="#v-bottom"/></svg></button>
                <button class="more" aria-label="Isometric"><svg class="icon32"><use href="#v-iso"/></svg></button>
                <button class="last" aria-label="Last view"><svg class="icon32"><use href="#v-back"/></svg></button>
                <button class="last" aria-label="Refresh"><svg class="icon32"><use href="#v-refresh"/></svg></button>
                <button class="last" aria-label="Zoom to fit"><svg class="icon32"><use href="#v-fit"/></svg></button>
                <button class="last more" aria-label="Zoom to box"><svg class="icon32"><use href="#v-box"/></svg></button>
                <button class="last more selected" aria-label="Shaded"><svg class="icon32"><use href="#v-shaded"/></svg></button>
                <button class="last" aria-label="Wireframe"><svg class="icon32"><use href="#v-wire"/></svg></button>
                <button class="last selected" aria-label="Block"><svg class="icon32"><use href="#i-block"/></svg></button>
                <button class="more" aria-label="Select mode"><svg class="icon32"><use href="#i-mode"/></svg></button>
                <button aria-label="Previous selection"><svg class="icon32"><use href="#i-previous"/></svg></button>
            </div>
        </aside>

        <!-- Vertical add-in window -->
        <aside class="addins">
            <div class="panel-head">
                <h2>Vertikální okno doplňků</h2>
                <button aria-label="Menu"><i class="caret big-caret"></i></button>
                <button aria-label="Close"><svg width="8" height="8"><path d="M0 0l8 8M8 0L0 8" stroke="#777" stroke-width="2"/></svg></button>
            </div>
            <div class="addins-body">
                <div class="accordion">
                    <button class="section active"><svg class="icon24"><use href="#a-analysis"/></svg><span>Analýza simulace</span><svg width="12" height="10"><path d="M1 4.500l9-4v8z" fill="#fff" stroke="#111"/></svg></button>
                    <button class="section"><svg class="icon24"><use href="#a-robots"/></svg><span>Knihovna robotů</span><svg width="12" height="10"><path d="M1 4.500l9-4v8z" fill="#999" stroke="#111"/></svg></button>
                    <button class="section"><svg class="icon24"><use href="#a-cell"/></svg><span>Robotická buňka</span><svg width="12" height="10"><path d="M1 4.500l9-4v8z" fill="#999" stroke="#111"/></svg></button>
                    <button class="section"><svg class="icon24"><use href="#a-control"/></svg><span>Řízení robotu</span><svg width="12" height="10"><path d="M1 4.500l9-4v8z" fill="#999" stroke="#111"/></svg></button>
                    <button class="section marked"><svg class="icon24"><use href="#a-program"/></svg><span>Program robotu</span><svg width="12" height="10"><path d="M1.500.5h8l-4 9z" fill="#999" stroke="#111"/></svg></button>
                    <div class="section-body">
                        <input class="program-name" type="text" placeholder="Program name" aria-label="Program name">
                        <div class="plane-row">
                            <div class="plane-field">
                                <label for="plane">Výstupní pracovní rovina</label>
                                <select id="plane" disabled></select>
                            </div>
                            <button class="plane-button" aria-label="Vybrat rovinu" disabled><svg class="icon32"><use href="#a-frames"/></svg></button>
                        </div>
                        <div class="sub-tabs">
                            <button class="active"><svg class="icon16"><use href="#a-tape"/></svg>NC program</button>
                            <button><svg class="icon16"><use href="#a-params"/></svg>Parametry</button>
                        </div>
                        <p class="hint">Klikněte pravým tlačítkem do oblasti níže pro přidání položky</p>
                    </div>
                </div>
                <div class="scrollbar">
                    <svg width="9" height="6"><path d="M1 5l3.500-4L8 5" fill="none" stroke="#555" stroke-width="2"/></svg>
                    <div class="thumb addin-thumb"></div>
                    <svg width="9" height="6"><path d="M1 1l3.500 4L8 1" fill="none" stroke="#555" stroke-width="2"/></svg>
                </div>
            </div>
        </aside>
    </main>

    <!-- Status bar -->
    <footer class="status">
        <button class="status-button" aria-label="Workplane"><svg class="icon24"><use href="#s-plane"/></svg></button>
        <select aria-label="Workplane"></select>
        <button class="status-button" aria-label="X"><svg class="icon20"><use href="#s-x"/></svg></button>
        <button class="status-button" aria-label="Y"><svg class="icon20"><use href="#s-y"/></svg></button>
        <button class="status-button selected" aria-label="Z"><svg class="icon20"><use href="#s-z"/></svg></button>
        <button class="status-button" aria-label="Lock"><svg class="icon20"><use href="#s-lock"/></svg></button>
        <button class="status-button apart" aria-label="Grid"><svg class="icon20"><use href="#s-grid"/></svg></button>
        <input type="text" disabled aria-label="Grid size">
        <input class="apart" type="text" value="827.446" aria-label="X">
        <input type="text" value="-3437" aria-label="Y">
        <input type="text" value="0" aria-label="Z">
        <button class="status-button" aria-label="XYZ list"><svg class="icon20"><use href="#s-xyz"/></svg></button>
        <button class="status-button" aria-label="Points"><svg class="icon20"><use href="#s-points"/></svg></button>
        <input class="wide" type="text" disabled aria-label="Distance">
        <button class="status-button apart" aria-label="Pause"><svg class="icon20"><use href="#s-pause"/></svg></button>
        <svg class="field-icon apart"><use href="#s-ruler"/></svg>
        <input type="text" value="mm" aria-label="Units">
        <svg class="field-icon"><use href="#s-cross"/></svg>
        <input type="text" value="0.1" aria-label="Tolerance">
        <svg class="field-icon"><use href="#s-step"/></svg>
        <input type="text" value="0.0" aria-label="Thickness">
        <svg class="field-icon"><use href="#s-diam"/></svg>
        <input type="text" value="0.0" aria-label="Diameter">
        <svg class="field-icon"><use href="#s-rad"/></svg>
        <input type="text" aria-label="Radius">
        <svg class="grip" width="9" height="9"><path d="M6 0h2v2H6zM3 3h2v2H3zM6 3h2v2H6zM0 6h2v2H0zM3 6h2v2H3zM6 6h2v2H6z" fill="#bbb"/></svg>
    </footer>

</body>
</html>
```
FILE: styles.css
```
* {
    box-sizing: border-box;
}
body {
    margin: 0;
    height: 100vh;
    display: flex;
    flex-direction: column;
    overflow: hidden;
    border: 1px solid #555;
    border-bottom-width: 2px;
    padding: 0 2px;
    background-color: #f0f0f0;
    color: #1e1e1e;
    font-family: 'Open Sans', 'Noto Sans', sans-serif;
    font-size: 11px;
    line-height: 13px;
}
button {
    background: none;
    border: none;
    padding: 0;
    margin: 0;
    font: inherit;
    color: inherit;
}
input, select {
    font: inherit;
    color: #111;
    margin: 0;
}
svg {
    display: block;
    flex: none;
}
.library {
    display: none;
}
.icon16 { width: 16px; height: 16px; }
.icon20 { width: 20px; height: 20px; }
.icon24 { width: 24px; height: 24px; }
.icon32 { width: 32px; height: 32px; }

/* small drop-down arrows */
.caret {
    display: inline-block;
    width: 6px;
    height: 4px;
    background-color: #777;
    clip-path: polygon(0 0, 100% 0, 50% 100%);
}
.caret.up {
    clip-path: polygon(50% 0, 100% 100%, 0 100%);
    opacity: .5;
}
.caret.bar {
    height: 7px;
    clip-path: polygon(0 0, 100% 0, 100% 1px, 0 1px, 0 3px, 100% 3px, 50% 100%, 0 3px);
}
.caret.big-caret {
    width: 9px;
    height: 5px;
}

/* title bar */
.titlebar {
    display: flex;
    align-items: center;
    height: 29px;
    flex: none;
}
.quick {
    display: flex;
    align-items: center;
    padding-left: 2px;
}
.quick > .icon16 {
    margin-right: 8px;
}
.quick-button {
    width: 22px;
    height: 22px;
    display: grid;
    place-items: center;
}
.pressed {
    background-color: #d8d8d8;
}
.app-title {
    flex: 1;
    text-align: center;
    padding-right: 10px;
    white-space: nowrap;
}
.quick .caret {
    margin: 0 3px;
}
.window-buttons {
    display: flex;
    justify-content: flex-end;
    align-items: center;
    gap: 25px;
    padding-right: 12px;
}

/* ribbon tabs */
.tabs {
    display: flex;
    height: 25px;
    flex: none;
    margin-bottom: -1px;
}
.tab {
    padding: 0 14px;
    border: 1px solid transparent;
    white-space: nowrap;
}
.tab.file {
    background-color: #666;
    color: #fff;
    margin-right: 3px;
    padding: 0 12px;
}
.tab.active {
    background-color: #fff;
    border-color: #c6c6c6;
    border-bottom-color: #fff;
    color: #555;
    padding: 0 12px;
    position: relative;
}
.collapse {
    margin-left: auto;
    padding: 0 5px;
}

/* ribbon */
.ribbon {
    display: grid;
    grid-template-columns: 101fr 264fr 106fr 327fr 161fr 100fr 121fr 159fr 88fr;
    height: 94px;
    flex: none;
    background-color: #fff;
    border: 1px solid #c6c6c6;
    padding: 2px 5px 2px 0;
}
.group {
    display: flex;
    flex-direction: column;
    border-right: 1px solid #c6c6c6;
    min-width: 0;
}
.tools {
    display: flex;
    justify-content: center;
    align-items: flex-start;
    gap: 7px;
    flex: 1;
    padding: 5px 0 0 3px;
}
.tools.left {
    justify-content: flex-start;
    padding-left: 16px;
}
.big {
    display: flex;
    flex-direction: column;
    align-items: center;
    white-space: nowrap;
}
.big .icon32 {
    margin-bottom: 4px;
}
.line {
    min-height: 13px;
}
.line .caret {
    vertical-align: middle;
}
button:disabled {
    color: #bbb;
}
button:disabled .caret {
    background-color: #bbb;
}
.stack {
    display: flex;
    flex-direction: column;
    margin-top: -3px;
}
.small {
    display: flex;
    align-items: center;
    gap: 3px;
    height: 22px;
    white-space: nowrap;
}
.macro .small {
    padding-left: 4px;
    gap: 5px;
}
.gallery {
    display: flex;
    border: 1px solid #e0e0e0;
    height: 60px;
}
.gallery .big {
    width: 80px;
    padding-top: 4px;
}
.gallery .icon32 {
    margin-bottom: 3px;
}
.gallery-scroll {
    display: grid;
    width: 14px;
    border-left: 1px solid #e0e0e0;
}
.gallery-scroll button {
    display: grid;
    place-items: center;
    border-bottom: 1px solid #e0e0e0;
}
.group-name {
    text-align: center;
    height: 16px;
}
.group-name.launcher {
    display: grid;
    grid-template-columns: 1fr auto 1fr;
}
.launcher::before {
    content: "";
}
.launcher svg {
    justify-self: end;
    margin: 2px 5px;
}

/* workspace */
.workspace {
    display: flex;
    flex: 1;
    min-height: 0;
}
.panel-head {
    display: flex;
    align-items: center;
    gap: 10px;
    height: 35px;
    flex: none;
    padding: 0 7px 0 4px;
}
.panel-head h2 {
    flex: 1;
    margin: 0;
    font-size: 18px;
    line-height: 24px;
    font-weight: 400;
    white-space: nowrap;
}
.panel-head button {
    display: grid;
    place-items: center;
}

/* explorer */
.explorer {
    width: 242px;
    flex: none;
    display: flex;
    flex-direction: column;
    padding-right: 5px;
}
.explorer-tabs {
    display: flex;
    height: 36px;
    flex: none;
    padding-left: 2px;
    border-bottom: 1px solid #c6c6c6;
}
.explorer-tabs button {
    width: 36px;
    display: grid;
    align-items: center;
    padding-left: 5px;
}
.explorer-tabs .active {
    width: 40px;
    padding: 0;
    justify-items: center;
    background-color: #fff;
    border: 1px solid #c6c6c6;
    border-bottom: none;
    margin-bottom: -1px;
}
.explorer-body {
    display: flex;
    flex: 1;
    min-height: 0;
    background-color: #fff;
    padding-top: 3px;
}
.tree, .branch {
    list-style: none;
    margin: 0;
    padding: 0;
    background: linear-gradient(#999 50%, transparent 50%) 11px 9px / 1px 2px repeat-y;
}
.tree {
    flex: 1;
    overflow: hidden;
}
.branch {
    margin-left: 19px;
    background-position: 11px 0;
}
.row {
    display: flex;
    align-items: center;
    height: 18px;
}
.row span, .row b {
    margin-left: 4px;
    padding: 0 1px;
    white-space: nowrap;
}
.row b {
    color: #000;
}
.row span.hovered {
    background-color: #f0f0f0;
    line-height: 18px;
}
.toggle {
    width: 9px;
    height: 9px;
    margin: 0 6px 0 7px;
    border: 1px solid #999;
    background-color: #fff;
    color: #23407c;
    font-size: 9px;
    line-height: 7px;
    font-weight: 700;
}
.leaf {
    width: 11px;
    height: 1px;
    margin-left: 11px;
    background: linear-gradient(90deg, #999 50%, transparent 50%) 0 0 / 2px 1px;
}
.scrollbar {
    width: 15px;
    flex: none;
    display: flex;
    flex-direction: column;
    align-items: center;
    background-color: #f0f0f0;
}
.scrollbar svg {
    margin: 6px 0 5px;
}
.thumb {
    width: 100%;
    background-color: #cdcdcd;
    margin-bottom: auto;
}
.tree-thumb {
    height: 90%;
}
.addin-thumb {
    height: 62%;
}

/* 3D view */
.center {
    flex: 1;
    min-width: 0;
    display: flex;
    flex-direction: column;
    border-left: 1px solid #999;
    border-right: 1px solid #c6c6c6;
}
.viewport {
    flex: 1;
    min-height: 0;
    background: linear-gradient(#f0f0f0, #b4b4b4 50%, #747474);
}
.scene {
    width: 100%;
    height: 100%;
}

/* horizontal add-in window */
.bottom-panel {
    flex: none;
}
.bottom-panel .panel-head {
    height: 41px;
    padding-top: 6px;
    border-bottom: 1px solid #c6c6c6;
}
.bottom-body {
    display: flex;
    height: 92px;
    background-color: #fff;
}
.side-tools {
    width: 42px;
    padding: 4px 4px 0;
    border-right: 1px solid #c6c6c6;
    display: flex;
    flex-direction: column;
    gap: 11px;
}
.player {
    width: 166px;
    padding: 0 4px 0 9px;
}
.player-buttons {
    display: flex;
    align-items: flex-start;
    gap: 9px;
    height: 44px;
    padding-top: 2px;
}
.player-buttons button:first-child {
    margin-right: 8px;
}
.player-buttons .icon32 {
    margin-top: 3px;
}
.player-buttons button:last-child {
    padding-top: 3px;
}
.sim-label {
    text-align: right;
    color: #555;
}
.sim-label b {
    color: #0a7cd8;
    font-size: 13px;
}
.timeline {
    flex: 1;
    padding: 8px 4px 0 0;
}
.ticks {
    display: flex;
    justify-content: space-between;
    padding: 0 5px;
}
.ticks i {
    width: 1px;
    height: 3px;
    background-color: #bbb;
}
.timeline input[type="range"] {
    -webkit-appearance: none;
    appearance: none;
    display: block;
    width: 100%;
    height: 24px;
    background: none;
}
.timeline input[type="range"]::-webkit-slider-runnable-track {
    height: 4px;
    background-color: #e6eaea;
    border: 1px solid #ccc;
}
.timeline input[type="range"]::-webkit-slider-thumb {
    -webkit-appearance: none;
    width: 10px;
    height: 21px;
    margin-top: -10px;
    background-color: #c8c8c8;
}
.progress {
    height: 14px;
    margin: 5px 6px 0 5px;
    border-left: 1px solid #ccc;
    background: linear-gradient(#d6d6d6, #d6d6d6) 0 7px / 100% 1px no-repeat;
}
.timeline-foot {
    display: flex;
    justify-content: space-between;
    align-items: flex-end;
    height: 33px;
    padding-left: 7px;
    color: #555;
}
.timeline-foot label {
    display: flex;
    align-items: center;
    gap: 6px;
}
.timeline-foot input {
    -webkit-appearance: none;
    appearance: none;
    width: 13px;
    height: 13px;
    border: 1px solid #ccc;
    background-color: #fff;
}

/* view toolbar */
.viewbar {
    width: 54px;
    flex: none;
    background-color: #fff;
    border-right: 1px solid #c6c6c6;
}
.viewbar .panel-head {
    background-color: #f0f0f0;
    border-bottom: 1px solid #c6c6c6;
    justify-content: flex-end;
}
.view-buttons {
    display: flex;
    flex-direction: column;
    align-items: center;
    padding: 4px 0 0 5px;
}
.view-buttons button {
    width: 40px;
    height: 40px;
    flex: none;
    display: grid;
    place-items: center;
    border: 1px solid transparent;
}
.view-buttons .last {
    margin-bottom: 7px;
}
.view-buttons .more {
    background: linear-gradient(135deg, transparent 50%, #111 50%) right 0 bottom 0 / 5px 5px no-repeat;
}
.view-buttons .selected {
    background-color: #cce5fb;
    border-color: #99cef8;
}

/* vertical add-in window */
.addins {
    width: 348px;
    flex: none;
    display: flex;
    flex-direction: column;
}
.addins .panel-head {
    padding-left: 9px;
    border-bottom: 1px solid #c6c6c6;
}
.addins-body {
    flex: 1;
    min-height: 0;
    display: flex;
    gap: 3px;
    background-color: #fff;
}
.addins .scrollbar {
    width: 16px;
}
.accordion {
    flex: 1;
    display: flex;
    flex-direction: column;
    gap: 3px;
    padding: 2px 0 0 7px;
}
.section {
    display: flex;
    align-items: center;
    gap: 6px;
    height: 31px;
    flex: none;
    padding: 0 10px 0 4px;
    text-align: left;
    background-color: #f0f0f0;
    border-top: 1px solid #ccc;
    border-bottom: 1px solid #888;
    color: #111;
}
.section.active {
    background-color: #d8e9f9;
}
.section span {
    flex: 1;
}
/* red frame drawn over the highlighted section */
.section.marked {
    position: relative;
}
.section.marked::after {
    content: "";
    position: absolute;
    inset: -6px -2px -9px -1px;
    border: 3px solid #ea4b48;
    pointer-events: none;
}
.section-body {
    flex: 1;
    padding: 5px 3px 0;
    border: 1px solid #999;
    border-width: 0 1px;
}
.program-name {
    display: block;
    width: 100%;
    height: 21px;
    padding: 0;
    border: 1px solid #ccc;
    background-color: #f0f0f0;
    text-align: center;
    font-style: italic;
    font-size: 13px;
}
.program-name::placeholder {
    color: #777;
}
.plane-row {
    display: flex;
    gap: 7px;
    align-items: flex-end;
    margin-top: 7px;
}
.plane-field {
    flex: 1;
}
.plane-field label {
    display: block;
    padding: 0 5px;
    margin-bottom: 3px;
    color: #555;
}
select {
    -webkit-appearance: none;
    appearance: none;
    display: block;
    width: 100%;
    height: 24px;
    border: 1px solid #bbb;
    border-radius: 0;
    background: #ccc url("data:image/svg+xml,%3Csvg xmlns='http://www.w3.org/2000/svg' width='10' height='6'%3E%3Cpath d='M1 1l4 4 4-4' fill='none' stroke='%23888'/%3E%3C/svg%3E") right 3px center no-repeat;
    opacity: 1;
}
.plane-button {
    width: 40px;
    height: 40px;
    display: grid;
    place-items: center;
    background-color: #ccc;
    border: 1px solid #bbb;
}
.sub-tabs {
    display: flex;
    align-items: flex-end;
    height: 27px;
    margin: 0 -3px;
    border-bottom: 1px solid #ccc;
}
.sub-tabs button {
    display: flex;
    align-items: center;
    gap: 4px;
    height: 19px;
    padding: 0 4px;
    background-color: #f0f0f0;
    border: 1px solid #ccc;
    border-bottom: none;
}
.sub-tabs .active {
    height: 22px;
    padding: 0 5px 0 7px;
    background-color: #fff;
    margin-bottom: -1px;
}
.hint {
    margin: 2px 2px 0;
    font-style: italic;
    color: #444;
    white-space: nowrap;
}

/* status bar */
.status {
    display: flex;
    align-items: center;
    gap: 3px;
    height: 35px;
    flex: none;
    padding-left: 6px;
    border-top: 1px solid #c6c6c6;
}
.status input {
    width: 57px;
    height: 23px;
    padding: 0 4px;
    border: 1px solid #777;
    background-color: #f0f0f0;
}
.status input:disabled {
    width: 53px;
    border-color: #ccc;
}
.status input.wide {
    width: 90px;
}
.status select {
    width: 88px;
    height: 21px;
    border: none;
    background-color: #e1e1e1;
}
.status-button {
    width: 24px;
    height: 24px;
    display: grid;
    place-items: center;
}
.status-button.selected {
    background-color: #c2e0f7;
    border: 1px solid #90c8f6;
}
.field-icon {
    width: 23px;
    height: 22px;
}
.apart {
    margin-left: 10px;
}
.grip {
    margin: auto 3px 3px auto;
}
```
